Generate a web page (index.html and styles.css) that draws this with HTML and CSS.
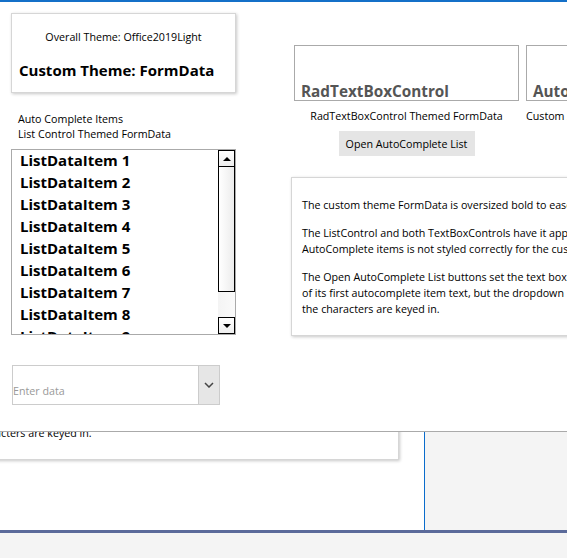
FILE: index.html
```html
<!DOCTYPE html>
<html><head><meta charset="utf-8">
<title>FormData theme</title>
<link rel="stylesheet" href="styles.css">
</head><body>

<div class="form">
	<!-- window behind -->
	<div class="back">
		<div class="back-main">
			<div class="back-left">
				<div class="note note-back">
					<p>The custom theme FormData is oversized bold to ease visibility.</p>
					<p>The ListControl and both TextBoxControls have it applied, but the dropdown of<br>AutoComplete items is not styled correctly for the custom theme.</p>
					<p>The Open AutoComplete List buttons set the text box text to the first character<br>of its first autocomplete item text, but the dropdown list is not themed until<br>the characters are keyed in.</p>
				</div>
			</div>
			<div class="back-line"></div>
			<div class="back-right"></div>
		</div>
		<div class="status-bar"></div>
		<div class="back-foot"></div>
	</div>

	<!-- window in front -->
	<div class="front">
		<div class="col-left">
			<div class="theme-box">
				<div class="theme-overall">Overall Theme: Office2019Light</div>
				<div class="theme-custom">Custom Theme: FormData</div>
			</div>
			<div class="list-caption">Auto Complete Items<br>List Control Themed FormData</div>
			<div class="listbox">
				<ul class="list-items">
					<li>ListDataItem 1</li>
					<li>ListDataItem 2</li>
					<li>ListDataItem 3</li>
					<li>ListDataItem 4</li>
					<li>ListDataItem 5</li>
					<li>ListDataItem 6</li>
					<li>ListDataItem 7</li>
					<li>ListDataItem 8</li>
					<li>ListDataItem 9</li>
				</ul>
				<div class="vscroll">
					<div class="vs-btn"><span class="tri-up"></span></div>
					<div class="vs-thumb"></div>
					<div class="vs-track"></div>
					<div class="vs-btn"><span class="tri-down"></span></div>
				</div>
			</div>
			<div class="combo">
				<span class="combo-input">Enter data</span>
				<span class="combo-btn"><svg width="10" height="6" viewBox="0 0 10 6"><path d="M1 1 L5 5 L9 1" fill="none" stroke="#444" stroke-width="1.5"/></svg></span>
			</div>
		</div>

		<div class="col-right">
			<div class="tb-row">
				<div class="tb-group">
					<div class="tb-box"><span>RadTextBoxControl</span></div>
					<div class="tb-caption">RadTextBoxControl Themed FormData</div>
					<button class="tb-btn">Open AutoComplete List</button>
				</div>
				<div class="tb-group">
					<div class="tb-box"><span>AutoCompleteBox</span></div>
					<div class="tb-caption">Custom AutoCompleteBox Themed FormData</div>
				</div>
			</div>
			<div class="note">
				<p>The custom theme FormData is oversized bold to ease visibility.</p>
				<p>The ListControl and both TextBoxControls have it applied, but the dropdown of<br>AutoComplete items is not styled correctly for the custom theme.</p>
				<p>The Open AutoComplete List buttons set the text box text to the first character<br>of its first autocomplete item text, but the dropdown list is not themed until<br>the characters are keyed in.</p>
			</div>
		</div>
	</div>
</div>

</body></html>
```

FILE: styles.css
```css
body {
	margin: 0;
	font-family: "Open Sans", sans-serif;
	font-size: 10.7px;
	color: #000;
	overflow: hidden;
}
.form {
	position: relative;
	width: 567px;
	height: 558px;
	overflow: hidden;
}

/* back window */
.back {
	display: grid;
	grid-template-rows: 530px 3px 25px;
	height: 558px;
}
.back-main {
	display: grid;
	grid-template-columns: 424px 1px 1fr;
}
.back-left {
	background: #fff;
	padding-top: 301px;
}
.back-line {
	background: #0a6ccc;
}
.back-right {
	background: #f4f4f4;
}
.status-bar {
	background: #5b6a9a;
}
.back-foot {
	background: #f4f4f4;
}

/* front window */
.front {
	position: absolute;
	top: 0;
	left: 0;
	right: 0;
	height: 429px;
	display: flex;
	background: #fff;
	border-top: 2px solid #1470c8;
	border-bottom: 1px solid #aaa;
	overflow: hidden;
}
.col-left {
	flex: none;
	width: 225px;
	margin-left: 11px;
	padding-top: 11px;
}
.theme-box {
	box-sizing: border-box;
	height: 80px;
	padding-top: 15px;
	border: 1px solid #d6d6d6;
	box-shadow: 1px 1px 3px rgba(0,0,0,.22);
}
.theme-overall {
	line-height: 16px;
	text-align: center;
}
.theme-custom {
	margin-top: 14px;
	padding-left: 7px;
	line-height: 22px;
	font-size: 15px;
	font-weight: bold;
}
.list-caption {
	box-sizing: border-box;
	height: 48px;
	padding: 19px 0 0 7px;
	line-height: 15px;
}
.listbox {
	box-sizing: border-box;
	display: flex;
	height: 186px;
	margin-top: 8px;
	border: 1px solid #aaa;
}
.list-items {
	flex: 1;
	margin: -1px 0 0;
	padding: 0 0 0 8px;
	list-style: none;
	overflow: hidden;
	font-size: 15px;
	font-weight: bold;
	line-height: 22px;
}
.vscroll {
	flex: none;
	width: 17px;
	display: flex;
	flex-direction: column;
	background: linear-gradient(to right, #f4f4f4, #fafafa);
}
.vs-btn {
	box-sizing: border-box;
	height: 17px;
	border: 1px solid #000;
	background: linear-gradient(#fff, #eee);
	display: flex;
	align-items: center;
	justify-content: center;
}
.tri-up {
	border: 4px solid transparent;
	border-top: 0;
	border-bottom: 4px solid #000;
}
.tri-down {
	border: 4px solid transparent;
	border-bottom: 0;
	border-top: 4px solid #000;
}
.vs-thumb {
	box-sizing: border-box;
	height: 126px;
	margin-top: -1px;
	border: 1px solid #000;
	background: linear-gradient(to right, #fff, #ececec);
}
.vs-track {
	flex: 1;
}
.combo {
	box-sizing: border-box;
	display: flex;
	width: 208px;
	height: 40px;
	margin: 30px 0 0 1px;
	border: 1px solid #ccc;
}
.combo-input {
	flex: 1;
	align-self: flex-end;
	padding: 0 0 6px 0;
	color: #999;
}
.combo-btn {
	flex: none;
	width: 20px;
	display: flex;
	align-items: center;
	justify-content: center;
	background: #e6e6e6;
	border-left: 1px solid #ccc;
}

.col-right {
	flex: none;
	margin-left: 55px;
	padding-top: 43px;
}
.tb-row {
	display: flex;
	gap: 7px;
	margin-left: 3px;
}
.tb-group {
	width: 225px;
	display: flex;
	flex-direction: column;
}
.tb-box {
	box-sizing: border-box;
	height: 56px;
	display: flex;
	align-items: flex-end;
	padding-left: 6px;
	border: 1px solid #aaa;
	color: #555;
	font-size: 15.3px;
	font-weight: bold;
	line-height: 18px;
	white-space: nowrap;
}
.tb-caption {
	margin-top: 7px;
	line-height: 16px;
	text-align: center;
	white-space: nowrap;
}
.tb-btn {
	align-self: center;
	width: 136px;
	height: 25px;
	margin-top: 7px;
	padding: 0;
	border: none;
	background: #e5e5e5;
	font: inherit;
	color: #000;
}
.note {
	box-sizing: border-box;
	width: 460px;
	height: 159px;
	margin-top: 21px;
	padding: 19px 0 0 10px;
	border: 1px solid #d6d6d6;
	box-shadow: 1px 1px 3px rgba(0,0,0,.22);
	background: #fff;
	line-height: 16px;
	white-space: nowrap;
	overflow: hidden;
}
.note p {
	margin: 0 0 12px;
}
.note-back {
	width: 456px;
	margin-left: -57px;
	margin-top: 0;
}
```
